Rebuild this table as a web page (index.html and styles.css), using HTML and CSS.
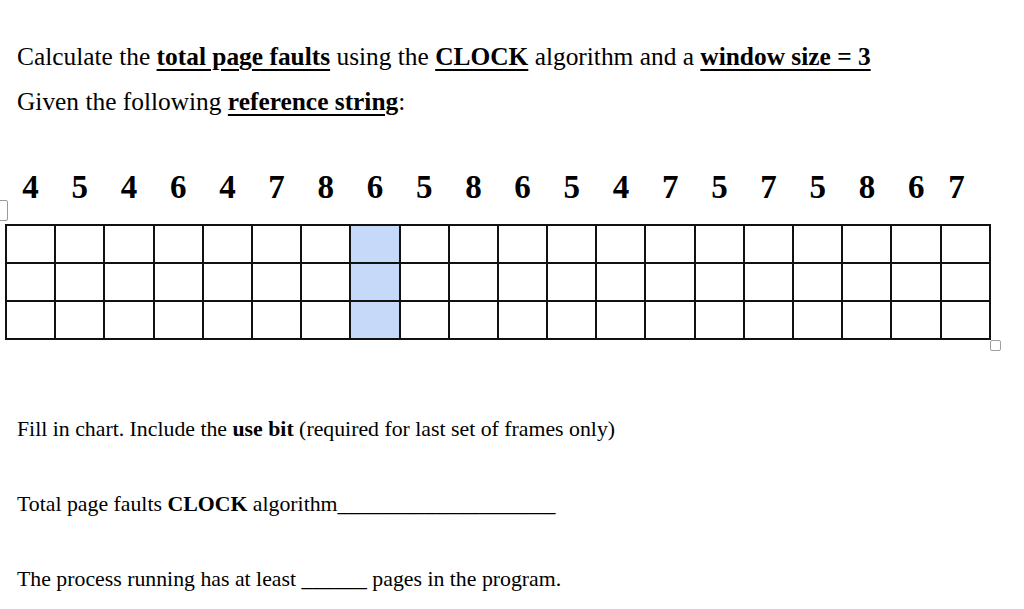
FILE: index.html
```html
<!DOCTYPE html>
<html>
<head>
<meta charset="utf-8">
<link rel="stylesheet" href="styles.css">
</head>
<body>
<div class="page">
  <div class="intro">
    <p class="line">Calculate the <b class="ul">total page faults</b> using the <b class="ul">CLOCK</b> algorithm and a <b class="ul">window size = 3</b></p>
    <p class="line">Given the following <b class="ul">reference string</b>:</p>
  </div>
  <div class="refs">
    <span>4</span><span>5</span><span>4</span><span>6</span><span>4</span><span>7</span><span>8</span><span>6</span><span>5</span><span>8</span><span>6</span><span>5</span><span>4</span><span>7</span><span>5</span><span>7</span><span>5</span><span>8</span><span>6</span><span class="last">7</span>
  </div>
  <div class="table-wrap">
    <span class="move-handle"></span>
    <table class="frames">
      <tbody>
        <tr><td></td><td></td><td></td><td></td><td></td><td></td><td></td><td class="hl"></td><td></td><td></td><td></td><td></td><td></td><td></td><td></td><td></td><td></td><td></td><td></td><td></td></tr>
        <tr><td></td><td></td><td></td><td></td><td></td><td></td><td></td><td class="hl"></td><td></td><td></td><td></td><td></td><td></td><td></td><td></td><td></td><td></td><td></td><td></td><td></td></tr>
        <tr><td></td><td></td><td></td><td></td><td></td><td></td><td></td><td class="hl"></td><td></td><td></td><td></td><td></td><td></td><td></td><td></td><td></td><td></td><td></td><td></td><td></td></tr>
      </tbody>
    </table>
    <span class="resize-handle"></span>
  </div>
  <div class="questions">
    <p class="q">Fill in chart. Include the <b>use bit</b> (required for last set of frames only)</p>
    <p class="q">Total page faults <b>CLOCK</b> algorithm____________________</p>
    <p class="q">The process running has at least ______ pages in the program.</p>
  </div>
</div>
</body>
</html>
```

FILE: styles.css
```css
html, body {
  margin: 0;
  padding: 0;
  background: #fff;
}
body {
  font-family: "Liberation Serif", "Times New Roman", serif;
  color: #000;
  width: 1024px;
  height: 609px;
  overflow: hidden;
}
.page {
  display: flex;
  flex-direction: column;
}
.intro {
  padding: 34px 0 0 17px;
}
.line {
  margin: 0;
  font-size: 25.4px;
  line-height: 45px;
  white-space: nowrap;
}
.ul {
  text-decoration: underline;
  text-decoration-thickness: 2px;
  text-underline-offset: 4px;
}
.refs {
  margin: 43px 0 0 6px;
  width: 984px;
  display: grid;
  grid-template-columns: repeat(20, 1fr);
  font-weight: bold;
  font-size: 33px;
  line-height: 40px;
  text-align: center;
}
.refs .last {
  position: relative;
  left: -9px;
}
.table-wrap {
  position: relative;
  margin: 17px 0 0 5px;
  width: 986px;
}
.frames {
  border-collapse: collapse;
  table-layout: fixed;
  width: 986px;
}
.frames td {
  border: 2px solid #111;
  height: 36px;
  padding: 0;
}
.frames td.hl {
  background: #c6d9f8;
}
.move-handle {
  position: absolute;
  left: -9px;
  top: -24px;
  width: 10px;
  height: 19px;
  border: 1px solid #9a9a9a;
  border-radius: 2px;
  background: #fff;
}
.resize-handle {
  position: absolute;
  right: -10px;
  bottom: -11px;
  width: 9px;
  height: 9px;
  border: 1.5px solid #a0a0a0;
  border-radius: 2px;
  background: #fff;
}
.questions {
  padding-left: 17px;
  margin-top: 74px;
}
.q {
  margin: 0 0 45px 0;
  font-size: 21.8px;
  line-height: 30px;
  white-space: nowrap;
}
```
